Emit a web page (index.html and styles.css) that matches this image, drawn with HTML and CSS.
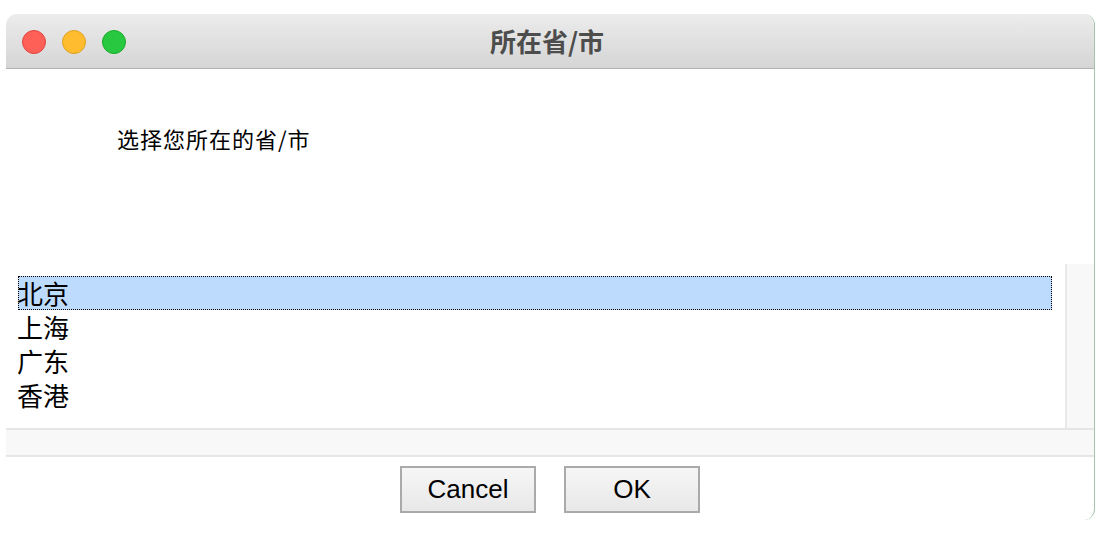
FILE: index.html
```html
<!DOCTYPE html>
<html lang="zh">
<head>
<meta charset="utf-8">
<title>所在省/市</title>
<link rel="stylesheet" href="styles.css">
</head>
<body>
<div class="window">
  <div class="titlebar">
    <div class="lights">
      <span class="light red"></span>
      <span class="light yellow"></span>
      <span class="light green"></span>
    </div>
    <div class="title">所在省/市</div>
  </div>
  <div class="content">
    <div class="message">选择您所在的省/市</div>
    <div class="scrollpane">
      <div class="list">
        <div class="item selected">北京</div>
        <div class="item">上海</div>
        <div class="item">广东</div>
        <div class="item">香港</div>
      </div>
      <div class="vscroll"></div>
    </div>
    <div class="hscroll"></div>
    <div class="buttons">
      <button class="btn">Cancel</button>
      <button class="btn">OK</button>
    </div>
  </div>
</div>
</body>
</html>
```
FILE: styles.css
```css
html, body {
  margin: 0;
  padding: 0;
  background: #ffffff;
}
body {
  font-family: "Liberation Sans", "Noto Sans CJK SC", sans-serif;
  padding: 14px 0 0 6px;
}
.window {
  width: 1088px;
  height: 506px;
  border-radius: 11px;
  overflow: hidden;
  background: #ffffff;
  border-right: 1px solid #a3c4ad;
  display: flex;
  flex-direction: column;
}
.titlebar {
  height: 54px;
  border-bottom: 1px solid #b2b2b2;
  background: linear-gradient(#ececec, #d5d5d5);
  position: relative;
  display: flex;
  align-items: center;
  justify-content: center;
  flex-shrink: 0;
}
.lights {
  position: absolute;
  left: 16px;
  top: 16px;
  display: flex;
  gap: 16px;
}
.light {
  width: 24px;
  height: 24px;
  border-radius: 50%;
  box-sizing: border-box;
}
.red { background: #fe5f57; border: 1px solid #e0443e; }
.yellow { background: #febc2e; border: 1px solid #dea123; }
.green { background: #28c840; border: 1px solid #1aab29; }
.title {
  font-family: "Noto Sans CJK SC", sans-serif;
  font-weight: bold;
  font-size: 26px;
  color: #4d4d4d;
  line-height: 30px;
  margin-left: -6px;
}
.content {
  flex: 1;
  display: flex;
  flex-direction: column;
}
.message {
  height: 195px;
  box-sizing: border-box;
  padding: 56px 0 0 111px;
  font-family: "Noto Sans CJK SC", sans-serif;
  font-size: 22px;
  letter-spacing: 1px;
  line-height: 26px;
  color: #000;
}
.scrollpane {
  height: 164px;
  display: flex;
}
.list {
  flex: 1;
  padding: 12px 13px 0 12px;
}
.item {
  height: 34px;
  box-sizing: border-box;
  border: 1px solid transparent;
  font-family: "Noto Sans CJK SC", sans-serif;
  font-size: 26px;
  line-height: 31px;
  color: #000;
  text-indent: -2px;
}
.item.selected {
  background: #bddcfd;
  border: 1px dotted #000;
}
.vscroll {
  width: 27px;
  background: #f8f8f8;
  border-left: 2px solid #e8e8e8;
}
.hscroll {
  height: 25px;
  background: #f8f8f8;
  border-top: 2px solid #e6e6e6;
  border-bottom: 2px solid #e6e6e6;
}
.buttons {
  flex: 1;
  display: flex;
  justify-content: center;
  align-items: flex-start;
  gap: 28px;
  padding-top: 9px;
}
.btn {
  width: 136px;
  height: 47px;
  box-sizing: border-box;
  border: 2px solid #aaaaaa;
  background: linear-gradient(#f6f6f6, #e8e8e8);
  font-family: "Liberation Sans", sans-serif;
  font-size: 26px;
  color: #000;
  padding: 0;
}
```
